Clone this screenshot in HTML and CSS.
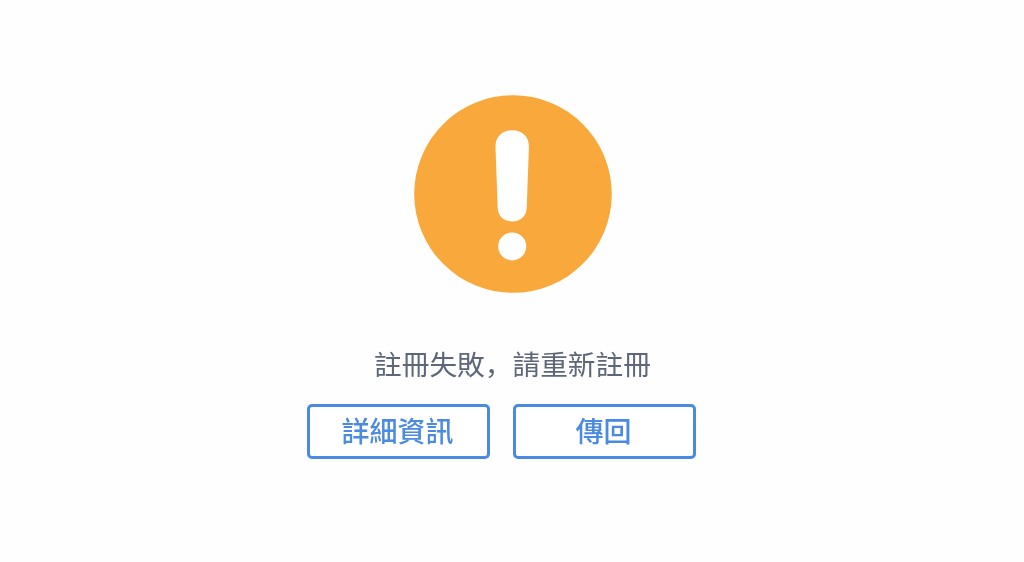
FILE: index.html
```html
<!DOCTYPE html>
<html lang="zh-Hans">
<head>
<meta charset="utf-8">
<title>註冊失敗</title>
<link rel="stylesheet" href="styles.css">
</head>
<body>
<main class="page">
  <svg class="icon" viewBox="0 0 198 198" aria-hidden="true">
    <circle cx="99" cy="99" r="98.800" fill="#f9a93b"/>
    <path fill="#fff" d="M98.200 35.200C88 35.200 81.200 42 81.500 52L83.700 113C84.100 121 89.700 126.400 98.200 126.400C106.700 126.400 112.300 121 112.700 113L114.900 52C115.200 42 108.500 35.200 98.200 35.200Z"/>
    <circle cx="98.200" cy="151.400" r="14" fill="#fff"/>
  </svg>
  <p class="message">註冊失敗，請重新註冊</p>
  <div class="actions">
    <button class="btn" type="button">詳細資訊</button>
    <button class="btn" type="button">傳回</button>
  </div>
</main>
</body>
</html>
```
FILE: styles.css
```css
html, body {
  margin: 0;
  padding: 0;
  height: 100%;
  background: #fefefe;
}
.page {
  display: flex;
  flex-direction: column;
  align-items: center;
  height: 562px;
  padding-top: 95px;
  box-sizing: border-box;
  font-family: "Noto Sans CJK SC", "Noto Sans", sans-serif;
  overflow: hidden;
  filter: blur(0.5px);
}
.icon {
  display: block;
  width: 198px;
  height: 198px;
  margin-left: 2.500px;
}
.message {
  margin: 50px 0 0 1px;
  font-size: 27.7px;
  font-weight: 400;
  line-height: 40px;
  color: #5d6779;
  white-space: nowrap;
}
.actions {
  display: flex;
  gap: 23px;
  margin-top: 21px;
  margin-right: 22px;
}
.btn {
  box-sizing: border-box;
  width: 183px;
  height: 55px;
  padding: 0 1px 4px 0;
  background: #fff;
  border: 3px solid #4a8ae2;
  border-radius: 5px;
  color: #4a8ae2;
  font-family: inherit;
  font-size: 28px;
  font-weight: 500;
  line-height: 1;
}
```
